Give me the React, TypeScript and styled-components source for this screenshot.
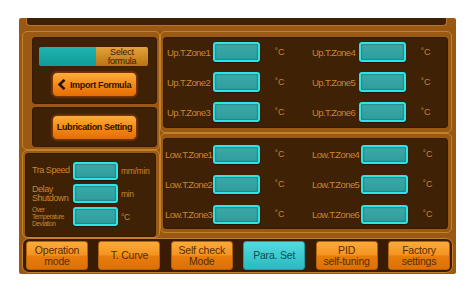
import React from "react"
import styled, { createGlobalStyle } from "styled-components"

const GlobalStyle = createGlobalStyle`
    html, body {
        margin: 0;
        padding: 0;
        background: #ffffff;
        font-family: "Liberation Sans", Arial, sans-serif;
    }
`

const upZones = [
    ["Up.T.Zone1", "Up.T.Zone4"],
    ["Up.T.Zone2", "Up.T.Zone5"],
    ["Up.T.Zone3", "Up.T.Zone6"],
]

const lowZones = [
    ["Low.T.Zone1", "Low.T.Zone4"],
    ["Low.T.Zone2", "Low.T.Zone5"],
    ["Low.T.Zone3", "Low.T.Zone6"],
]

const navItems = [
    { label: ["Operation", "mode"], active: false },
    { label: ["T. Curve"], active: false },
    { label: ["Self check", "Mode"], active: false },
    { label: ["Para. Set"], active: true },
    { label: ["PID", "self-tuning"], active: false },
    { label: ["Factory", "settings"], active: false },
]

function Chevron() {
    return (
        <svg width="8" height="11" viewBox="0 0 8 11">
            <path d="M6.5 0.8 L1.5 5.5 L6.5 10.2" fill="none" stroke="#2a1000" strokeWidth="2.6" strokeLinejoin="miter" />
        </svg>
    )
}

function App() {
    return (
        <Page>
            <GlobalStyle />
            <Device>
                <TopStrip />
                <Main>
                    <LeftCol>
                        <Frame $height={119} $pad="5px 2px 2px 9px">
                            <Panel $height={67} $pad="10px 0 0 0">
                                <SelectRow>
                                    <CyanBar />
                                    <SelectButton>Select<br />formula</SelectButton>
                                </SelectRow>
                                <OrangeButton>
                                    <Chevron />
                                    Import Formula
                                </OrangeButton>
                            </Panel>
                            <Panel $height={40} $pad="0" $center>
                                <OrangeButton>Lubrication Setting</OrangeButton>
                            </Panel>
                        </Frame>
                        <Frame $height={88} $pad="2px 3px 0 2px">
                            <Panel $height={84} $pad="8px 0 0 7px">
                                <ParamGrid>
                                    <ParamLabel>Tra Speed</ParamLabel>
                                    <Field $w={45} $h={18} />
                                    <ParamUnit>mm/min</ParamUnit>
                                    <ParamLabel>Delay<br />Shutdown</ParamLabel>
                                    <Field $w={45} $h={19} />
                                    <ParamUnit>min</ParamUnit>
                                    <ParamLabel $small>Over<br />Temperature<br />Deviation</ParamLabel>
                                    <Field $w={45} $h={19} />
                                    <ParamUnit>°C</ParamUnit>
                                </ParamGrid>
                            </Panel>
                        </Frame>
                    </LeftCol>
                    <RightCol>
                        <Frame $height={102} $pad="5px 3px 4px 2px">
                            <Panel $height={91} $pad="5px 0 0 4px">
                                <ZoneList>
                                    {upZones.map((row) => (
                                        <ZoneRow key={row[0]}>
                                            {row.map((z, i) => (
                                                <ZoneCell key={z} $last={i === 1}>
                                                    <ZoneLabel $w={i === 0 ? 46 : 47}>{z}</ZoneLabel>
                                                    <Field $w={47} $h={20} />
                                                    <ZoneUnit>˚C</ZoneUnit>
                                                </ZoneCell>
                                            ))}
                                        </ZoneRow>
                                    ))}
                                </ZoneList>
                            </Panel>
                        </Frame>
                        <Frame $height={100} $pad="4px 3px 3px 2px">
                            <Panel $height={91} $pad="6px 0 0 2px">
                                <ZoneList>
                                    {lowZones.map((row) => (
                                        <ZoneRow key={row[0]}>
                                            {row.map((z, i) => (
                                                <ZoneCell key={z} $last={i === 1} $narrow>
                                                    <ZoneLabel $w={i === 0 ? 48 : 49}>{z}</ZoneLabel>
                                                    <Field $w={47} $h={19} />
                                                    <ZoneUnit>˚C</ZoneUnit>
                                                </ZoneCell>
                                            ))}
                                        </ZoneRow>
                                    ))}
                                </ZoneList>
                            </Panel>
                        </Frame>
                    </RightCol>
                </Main>
                <NavBar>
                    {navItems.map((item) => (
                        <NavButton key={item.label.join(" ")} $active={item.active}>
                            {item.label.map((line) => (
                                <span key={line}>{line}</span>
                            ))}
                        </NavButton>
                    ))}
                </NavBar>
            </Device>
        </Page>
    )
}

// layout

const Page = styled.div`
    padding: 18px 0 0 19px;
`

const Device = styled.div`
    width: 437px;
    height: 256px;
    background: #995912;
    display: flex;
    flex-direction: column;
    box-sizing: border-box;
    border-radius: 2px;
`

const TopStrip = styled.div`
    height: 8px;
    margin: 0 9px 0 7px;
    background: #3e2006;
    border: 1px solid #b8742a;
    border-top: none;
    border-radius: 0 0 4px 4px;
    box-sizing: border-box;
`

const Main = styled.div`
    display: flex;
    margin: 5px 3px 0 3px;
    height: 207px;
`

const LeftCol = styled.div`
    width: 138px;
    display: flex;
    flex-direction: column;
`

const RightCol = styled.div`
    width: 292px;
    display: flex;
    flex-direction: column;
`

const Frame = styled.div<{ $height: number; $pad: string }>`
    height: ${(p) => p.$height}px;
    padding: ${(p) => p.$pad};
    box-sizing: border-box;
    border: 1px solid #c3812f;
    border-radius: 5px;
    background: #9a5a13;
    display: flex;
    flex-direction: column;
    gap: 3px;
`

const Panel = styled.div<{ $height: number; $pad: string; $center?: boolean }>`
    height: ${(p) => p.$height}px;
    padding: ${(p) => p.$pad};
    box-sizing: border-box;
    background: #3f2106;
    border-radius: 4px;
    box-shadow: inset 0 0 2px rgba(0, 0, 0, 0.5);
    display: flex;
    flex-direction: column;
    align-items: ${(p) => (p.$center ? "center" : "stretch")};
    justify-content: ${(p) => (p.$center ? "center" : "flex-start")};
`

// left panels

const SelectRow = styled.div`
    display: flex;
    margin: 0 0 6px 7px;
    height: 19px;
`

const CyanBar = styled.div`
    width: 57px;
    height: 19px;
    background: linear-gradient(#1fb3b0, #119c99);
    border-radius: 2px 0 0 2px;
`

const SelectButton = styled.div`
    width: 52px;
    height: 19px;
    background: linear-gradient(#e3a33a, #b97412);
    border-radius: 0 2px 2px 0;
    color: #3a1c02;
    font-size: 9px;
    line-height: 8.5px;
    letter-spacing: -0.2px;
    text-align: center;
    padding-top: 1px;
    box-sizing: border-box;
`

const OrangeButton = styled.div`
    align-self: center;
    width: 85px;
    height: 25px;
    box-sizing: border-box;
    display: flex;
    align-items: center;
    justify-content: center;
    gap: 4px;
    background: linear-gradient(#fbad3b 0%, #f48a16 50%, #e46d05 100%);
    border: 1px solid #7a3300;
    border-radius: 5px;
    box-shadow: 0 0 2px rgba(255, 150, 40, 0.6);
    color: #2e1200;
    font-size: 9px;
    font-weight: bold;
    letter-spacing: -0.35px;
    white-space: nowrap;
`

const ParamGrid = styled.div`
    display: grid;
    grid-template-columns: 41px 45px auto;
    grid-auto-rows: 19px;
    row-gap: 4px;
    column-gap: 0;
    align-items: center;
`

const ParamLabel = styled.div<{ $small?: boolean }>`
    color: #c8862d;
    font-size: ${(p) => (p.$small ? "6.6px" : "9px")};
    line-height: ${(p) => (p.$small ? "7px" : "9px")};
    letter-spacing: ${(p) => (p.$small ? "-0.45px" : "-0.45px")};
    white-space: nowrap;
`

const ParamUnit = styled.div`
    color: #c8862d;
    font-size: 8.5px;
    padding-left: 3px;
    letter-spacing: -0.3px;
`

const Field = styled.div<{ $w: number; $h: number }>`
    width: ${(p) => p.$w}px;
    height: ${(p) => p.$h}px;
    flex-shrink: 0;
    box-sizing: border-box;
    background: linear-gradient(#3aa9a8, #2f9d9c);
    border: 2px solid #2fe4e6;
    border-radius: 3px;
    box-shadow: inset 0 0 2px rgba(0, 60, 60, 0.8), 0 1px 1px rgba(0, 0, 0, 0.4);
`

// zones

const ZoneList = styled.div`
    display: flex;
    flex-direction: column;
    gap: 10px;
`

const ZoneRow = styled.div`
    display: flex;
    height: 20px;
    align-items: center;
`

const ZoneCell = styled.div<{ $last?: boolean; $narrow?: boolean }>`
    display: flex;
    align-items: center;
    width: ${(p) => (p.$last ? "auto" : p.$narrow ? "147px" : "145px")};
`

const ZoneLabel = styled.div<{ $w: number }>`
    width: ${(p) => p.$w}px;
    flex-shrink: 0;
    color: #c8862d;
    font-size: 9.5px;
    letter-spacing: -0.6px;
    white-space: nowrap;
    overflow: hidden;
`

const ZoneUnit = styled.div`
    margin-left: 15px;
    color: #c8862d;
    font-size: 9px;
`

// bottom navigation

const NavBar = styled.div`
    margin: 0 3px;
    height: 35px;
    box-sizing: border-box;
    padding: 3px 2px 3px 3px;
    background: #3a1c04;
    border: 1px solid #c3812f;
    border-radius: 7px;
    display: flex;
    justify-content: space-between;
    align-items: center;
`

const NavButton = styled.div<{ $active: boolean }>`
    width: 62px;
    height: 29px;
    box-sizing: border-box;
    display: flex;
    flex-direction: column;
    align-items: center;
    justify-content: center;
    border-radius: 3px;
    border: 1px solid ${(p) => (p.$active ? "#1e9ea3" : "#b0620a")};
    background: ${(p) =>
        p.$active
            ? "linear-gradient(#5ad8dc 0%, #3ccbd0 50%, #2db9be 100%)"
            : "linear-gradient(#f9ab3a 0%, #f39320 48%, #e87d0c 52%, #dd7006 100%)"};
    color: ${(p) => (p.$active ? "#0f4d56" : "#5a2c02")};
    font-size: 10.5px;
    line-height: 11px;
    letter-spacing: -0.2px;
    text-align: center;
    white-space: nowrap;
`

export default App
